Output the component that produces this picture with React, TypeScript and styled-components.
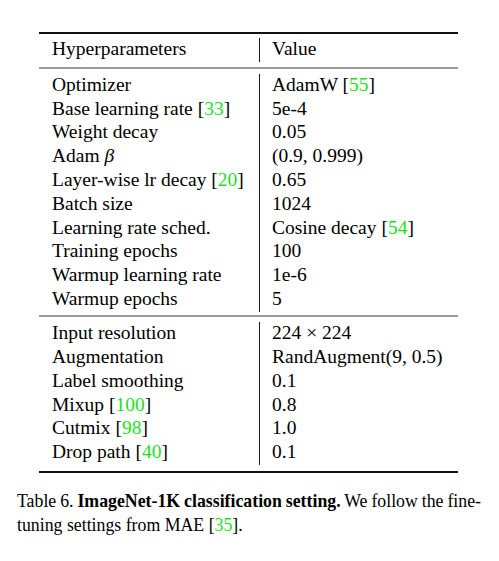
import React from "react";
import styled, { createGlobalStyle } from "styled-components";

const GlobalStyle = createGlobalStyle`
body {
  margin: 0;
  background: #ffffff;
}
`;

const Page = styled.div`
width: 499px;
height: 561px;
box-sizing: border-box;
padding-top: 32px;
background: #ffffff;
color: #000;
font-family: "Liberation Serif", "Times New Roman", serif;
`;

const Table = styled.div`
margin-left: 39px;
width: 419px;
font-size: 19.5px;
`;

const Rule = styled.div<{ light?: boolean }>`
height: ${props => (props.light ? "2px" : "1.5px")};
background: ${props => (props.light ? "#9a9a9a" : "#111")};
`;

const Section = styled.div<{ top: number; bottom: number }>`
margin-top: ${props => props.top}px;
margin-bottom: ${props => props.bottom}px;
`;

const Row = styled.div`
display: grid;
grid-template-columns: 220px 1fr;
height: 23.8px;
white-space: nowrap;
`;

const Name = styled.div`
padding-left: 13px;
line-height: 22px;
`;

const Value = styled.div`
border-left: 1px solid #1a1a1a;
padding-left: 12px;
line-height: 22px;
`;

const Cite = styled.span`
color: #1ee01e;
`;

const Beta = styled.span`
font-style: italic;
`;

const Caption = styled.div`
margin: 16px 0 0 17px;
width: 464px;
font-size: 17.8px;
line-height: 24px;
`;

const JustLine = styled.div`
text-align: justify;
text-align-last: justify;
word-spacing: -2px;
white-space: nowrap;
`;

const Bold = styled.b`
font-weight: bold;
`;

type Item = { name: React.ReactNode; value: React.ReactNode };

const c = (n: number) => (
  <>
    [<Cite>{n}</Cite>]
  </>
);

const groupOne: Item[] = [
  { name: "Optimizer", value: <>AdamW {c(55)}</> },
  { name: <>Base learning rate {c(33)}</>, value: "5e-4" },
  { name: "Weight decay", value: "0.05" },
  { name: <>Adam <Beta>β</Beta></>, value: "(0.9, 0.999)" },
  { name: <>Layer-wise lr decay {c(20)}</>, value: "0.65" },
  { name: "Batch size", value: "1024" },
  { name: "Learning rate sched.", value: <>Cosine decay {c(54)}</> },
  { name: "Training epochs", value: "100" },
  { name: "Warmup learning rate", value: "1e-6" },
  { name: "Warmup epochs", value: "5" },
];

const groupTwo: Item[] = [
  { name: "Input resolution", value: "224 × 224" },
  { name: "Augmentation", value: "RandAugment(9, 0.5)" },
  { name: "Label smoothing", value: "0.1" },
  { name: <>Mixup {c(100)}</>, value: "0.8" },
  { name: <>Cutmix {c(98)}</>, value: "1.0" },
  { name: <>Drop path {c(40)}</>, value: "0.1" },
];

const renderRows = (items: Item[]) =>
  items.map((item, i) => (
    <Row key={i}>
      <Name>{item.name}</Name>
      <Value>{item.value}</Value>
    </Row>
  ));

export default function App() {
  return (
    <Page>
      <GlobalStyle />
      <Table>
        <Rule />
        <Section top={4.5} bottom={5}>
          {renderRows([{ name: "Hyperparameters", value: "Value" }])}
        </Section>
        <Rule light />
        <Section top={5} bottom={3.5}>
          {renderRows(groupOne)}
        </Section>
        <Rule light />
        <Section top={5} bottom={6}>
          {renderRows(groupTwo)}
        </Section>
        <Rule />
      </Table>
      <Caption>
        <JustLine>
          Table 6. <Bold>ImageNet-1K classification setting.</Bold> We follow the fine-
        </JustLine>
        <div>
          tuning settings from MAE [<Cite>35</Cite>].
        </div>
      </Caption>
    </Page>
  );
}
